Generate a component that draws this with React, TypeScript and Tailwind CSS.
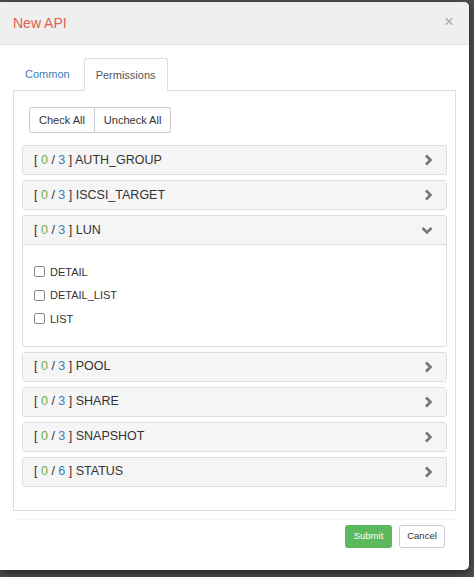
import React from "react";

type Group = { name: string; total: number; open?: boolean; items?: string[] };

const groups: Group[] = [
  { name: "AUTH_GROUP", total: 3 },
  { name: "ISCSI_TARGET", total: 3 },
  { name: "LUN", total: 3, open: true, items: ["DETAIL", "DETAIL_LIST", "LIST"] },
  { name: "POOL", total: 3 },
  { name: "SHARE", total: 3 },
  { name: "SNAPSHOT", total: 3 },
  { name: "STATUS", total: 6 },
];

function Chevron({ down }: { down?: boolean }) {
  if (down) {
    return (
      <svg width="12" height="9" viewBox="0 0 12 9" className="text-[#777]">
        <polyline points="1.5,2 6,6.5 10.5,2" fill="none" stroke="currentColor" strokeWidth="2.6" />
      </svg>
    );
  }
  return (
    <svg width="9" height="12" viewBox="0 0 9 12" className="text-[#777]">
      <polyline points="2,1.5 6.5,6 2,10.5" fill="none" stroke="currentColor" strokeWidth="2.6" />
    </svg>
  );
}

function Panel({ g }: { g: Group }) {
  return (
    <div className="border border-[#ddd] rounded-[3px] bg-white">
      <div className="h-[28px] bg-[#f5f5f5] flex items-center justify-between pl-[11px] pr-[13px] text-[12.5px] text-[#333]">
        <span>
          [ <span className="text-[#6fae4a]">0</span> / <span className="text-[#3c7dbb]">{g.total}</span> ] {g.name}
        </span>
        <Chevron down={g.open} />
      </div>
      {g.open && (
        <div className="border-t border-[#ddd] py-[15px] pl-[11px]">
          {g.items!.map((it) => (
            <label key={it} className="h-[23.5px] flex items-center gap-[5px] text-[11px] text-[#333]">
              <span className="w-[11px] h-[11px] border border-[#888] rounded-[2px] bg-white" />
              {it}
            </label>
          ))}
        </div>
      )}
    </div>
  );
}

export default function App() {
  return (
    <div className="w-[474px] h-[577px] bg-[#4d4d4d] pt-[2px] overflow-hidden font-['Liberation_Sans',Arial,sans-serif]">
      <div className="w-[469px] h-[568px] bg-white rounded-r-[5px] flex flex-col shadow-[0_3px_9px_rgba(0,0,0,0.5)]">
        <div className="h-[43px] shrink-0 bg-[#efefef] border-b border-[#e3e3e3] rounded-tr-[5px] flex items-center justify-between pl-[13px] pr-[15px]">
          <h4 className="text-[14px] text-[#e0604f]">New API</h4>
          <span className="text-[17px] leading-none text-[#aaa] -mt-[4px]">×</span>
        </div>

        <div className="px-[13px] pt-[13px]">
          <div className="flex h-[32px] text-[11px]">
            <div className="px-[12px] flex items-center text-[#3c7dbb] mr-[2px]">Common</div>
            <div className="px-[11px] flex items-center text-[#555] bg-white border border-b-0 border-[#ddd] rounded-t-[3px] relative -mb-px z-10">
              Permissions
            </div>
          </div>
          <div className="border border-[#ddd] p-[8px] pb-[23px]">
            <div className="ml-[7px] mt-[8px] mb-[12px] flex text-[11px] text-[#333]">
              <div className="h-[26px] px-[9px] flex items-center border border-[#ccc] rounded-l-[3px] bg-white">Check All</div>
              <div className="h-[26px] px-[9px] flex items-center border border-l-0 border-[#ccc] rounded-r-[3px] bg-white">Uncheck All</div>
            </div>
            <div className="flex flex-col gap-[5px]">
              {groups.map((g) => (
                <Panel key={g.name} g={g} />
              ))}
            </div>
          </div>
        </div>

        <div className="mt-[8px] mx-[13px] border-t border-[#f4f4f4] pt-[5px] flex justify-end gap-[7px] pr-[11px] text-[9.5px]">
          <div className="h-[23px] w-[47px] flex items-center justify-center rounded-[3px] bg-[#5cb85c] text-white">Submit</div>
          <div className="h-[23px] w-[46px] flex items-center justify-center rounded-[3px] border border-[#ccc] text-[#333] bg-white">Cancel</div>
        </div>
      </div>
    </div>
  );
}
